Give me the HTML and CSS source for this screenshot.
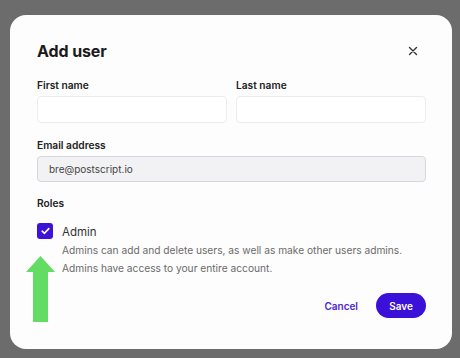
FILE: index.html
```html
<!DOCTYPE html>
<html>
<head>
<meta charset="utf-8">
<link rel="stylesheet" href="styles.css">
</head>
<body>
<div class="modal">
  <div class="header">
    <h1 class="title">Add user</h1>
    <svg class="close" width="10" height="10" viewBox="0 0 10 10"><path d="M1.5 1.5 L8.5 8.5 M8.5 1.5 L1.5 8.5" stroke="#333" stroke-width="1.4" stroke-linecap="round"/></svg>
  </div>
  <div class="row">
    <div class="field">
      <label class="label">First name</label>
      <div class="input"></div>
    </div>
    <div class="field">
      <label class="label">Last name</label>
      <div class="input"></div>
    </div>
  </div>
  <div class="field email-field">
    <label class="label">Email address</label>
    <div class="input input-disabled">bre@postscript.io</div>
  </div>
  <div class="label roles">Roles</div>
  <div class="check-row">
    <span class="checkbox"><svg width="9" height="8" viewBox="0 0 9 8"><path d="M1.2 4.2 L3.5 6.3 L7.8 1.6" fill="none" stroke="#fff" stroke-width="1.6" stroke-linecap="round" stroke-linejoin="round"/></svg></span>
    <div class="check-text">
      <div class="check-title">Admin</div>
      <div class="desc">Admins can add and delete users, as well as make other users admins.</div>
      <div class="desc">Admins have access to your entire account.</div>
    </div>
  </div>
  <div class="footer">
    <span class="cancel">Cancel</span>
    <span class="save">Save</span>
  </div>
</div>
<svg class="arrow" width="30" height="66" viewBox="0 0 30 66"><path d="M14.5 0 L29 16 L22 16 L22 66 L7 66 L7 16 L0 16 Z" fill="#62dc62"/></svg>
</body>
</html>
```
FILE: styles.css
```css
html, body {
  margin: 0;
  padding: 0;
}
body {
  width: 460px;
  height: 358px;
  overflow: hidden;
  background: #6c6c6c;
  font-family: Inter, "Noto Sans", sans-serif;
  position: relative;
  padding: 15px 8px 0 10px;
  box-sizing: border-box;
}
.modal {
  width: 442px;
  height: 334px;
  box-sizing: border-box;
  background: #fdfdfd;
  border-radius: 16px;
  padding: 26px 26px 0 27px;
  display: flex;
  flex-direction: column;
}
.header {
  display: flex;
  align-items: center;
  justify-content: space-between;
  height: 20px;
}
.title {
  margin: 0;
  font-size: 16px;
  font-weight: 700;
  color: #1a1a1a;
  letter-spacing: -0.1px;
  line-height: 20px;
}
.close {
  margin-right: 8px;
}
.row {
  display: flex;
  gap: 9px;
  margin-top: 18px;
}
.row .field {
  flex: 1;
}
.label {
  display: block;
  font-size: 10.2px;
  font-weight: 600;
  color: #222;
  line-height: 13px;
  margin-bottom: 4px;
}
.input {
  height: 27px;
  box-sizing: border-box;
  border: 1px solid #ececf0;
  border-radius: 4px;
  background: #fff;
}
.email-field {
  margin-top: 16px;
}
.input-disabled {
  height: 26px;
  background: #f2f2f4;
  border-color: #d6d6dc;
  font-size: 10px;
  color: #444;
  padding-left: 11px;
  line-height: 24px;
}
.roles {
  margin-top: 15px;
  margin-bottom: 0;
}
.check-row {
  display: flex;
  gap: 9px;
  margin-top: 12px;
}
.checkbox {
  width: 16px;
  height: 16px;
  margin-top: 0.5px;
  border-radius: 3px;
  background: #3d13d8;
  display: flex;
  align-items: center;
  justify-content: center;
  flex: none;
}
.check-text {
  padding-top: 2px;
}
.check-title {
  font-size: 11.5px;
  color: #333;
  line-height: 17px;
}
.desc {
  font-size: 10.2px;
  color: #6a6a6a;
  line-height: 18px;
}
.footer {
  display: flex;
  justify-content: flex-end;
  align-items: center;
  gap: 18px;
  margin-top: 16px;
}
.cancel {
  font-size: 10px;
  font-weight: 600;
  color: #4a26d4;
}
.save {
  width: 50px;
  height: 25px;
  flex: none;
  border-radius: 13px;
  background: #3b10d8;
  color: #fff;
  font-size: 10px;
  font-weight: 600;
  display: flex;
  align-items: center;
  justify-content: center;
}
.arrow {
  position: absolute;
  left: 26px;
  top: 256px;
}
```
